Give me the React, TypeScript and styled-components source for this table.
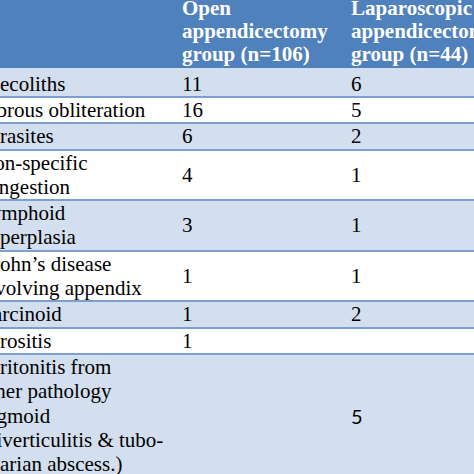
import * as React from "react";
import styled, { createGlobalStyle } from "styled-components";

const GlobalStyle = createGlobalStyle`
  html, body {
    margin: 0;
    padding: 0;
    background: #ffffff;
    overflow: hidden;
  }
`;

const Page = styled.div`
  width: 474px;
  height: 474px;
  overflow: hidden;
`;

const Table = styled.table`
  margin: -3px 0 0 -28px;
  width: 580px;
  border-collapse: collapse;
  table-layout: fixed;
  font-family: "Liberation Serif", "Times New Roman", serif;
  font-size: 21px;
  color: #000000;
`;

const HeadCell = styled.th`
  background: #4f81bd;
  color: #ffffff;
  font-weight: bold;
  text-align: left;
  vertical-align: top;
  line-height: 23px;
  padding: 0 7px 2px;
  height: 69px;
`;

const Row = styled.tr<{ $shaded?: boolean; $first?: boolean }>`
  background: ${(p) => (p.$shaded ? "#d3dfee" : "#ffffff")};
  border-top: ${(p) => (p.$first ? "none" : "2px solid #7ba0cd")};

  td {
    padding-top: ${(p) => (p.$first ? "3.7px" : "0")};
  }
`;

const Cell = styled.td<{ $sans?: boolean }>`
  padding: 0 7px;
  line-height: 24.3px;
  vertical-align: middle;
  white-space: nowrap;
  font-family: ${(p) =>
    p.$sans ? "Lato, 'Open Sans', sans-serif" : "inherit"};
  font-size: ${(p) => (p.$sans ? "20px" : "inherit")};
`;

const NameCell = styled(Cell)`
  vertical-align: top;
`;

interface Item {
  name: string[];
  open: string;
  lap: string;
  sansLap?: boolean;
}

const items: Item[] = [
  { name: ["Faecoliths"], open: "11", lap: "6" },
  { name: ["Fibrous obliteration"], open: "16", lap: "5" },
  { name: ["Parasites"], open: "6", lap: "2" },
  { name: ["Non-specific", "congestion"], open: "4", lap: "1" },
  { name: ["Lymphoid", "hyperplasia"], open: "3", lap: "1" },
  { name: ["Crohn\u2019s disease", "involving appendix"], open: "1", lap: "1" },
  { name: ["Carcinoid"], open: "1", lap: "2" },
  { name: ["Serositis"], open: "1", lap: "" },
  {
    name: [
      "Peritonitis from",
      "other pathology",
      "Sigmoid",
      "(diverticulitis & tubo-",
      "ovarian abscess.)",
    ],
    open: "",
    lap: "5",
    sansLap: true,
  },
];

const App: React.FC = () => {
  return (
    <Page>
      <GlobalStyle />
      <Table>
        <colgroup>
          <col style={{ width: 203 }} />
          <col style={{ width: 169 }} />
          <col style={{ width: 208 }} />
        </colgroup>
        <thead>
          <tr>
            <HeadCell />
            <HeadCell>
              Open
              <br />
              appendicectomy
              <br />
              group (n=106)
            </HeadCell>
            <HeadCell>
              Laparoscopic
              <br />
              appendicectomy
              <br />
              group (n=44)
            </HeadCell>
          </tr>
        </thead>
        <tbody>
          {items.map((item, i) => (
            <Row key={item.name[0]} $shaded={i % 2 === 0} $first={i === 0}>
              <NameCell>
                {item.name.map((line, j) => (
                  <React.Fragment key={line}>
                    {j > 0 && <br />}
                    {line}
                  </React.Fragment>
                ))}
              </NameCell>
              <Cell>{item.open}</Cell>
              <Cell $sans={item.sansLap}>{item.lap}</Cell>
            </Row>
          ))}
        </tbody>
      </Table>
    </Page>
  );
};

export default App;
